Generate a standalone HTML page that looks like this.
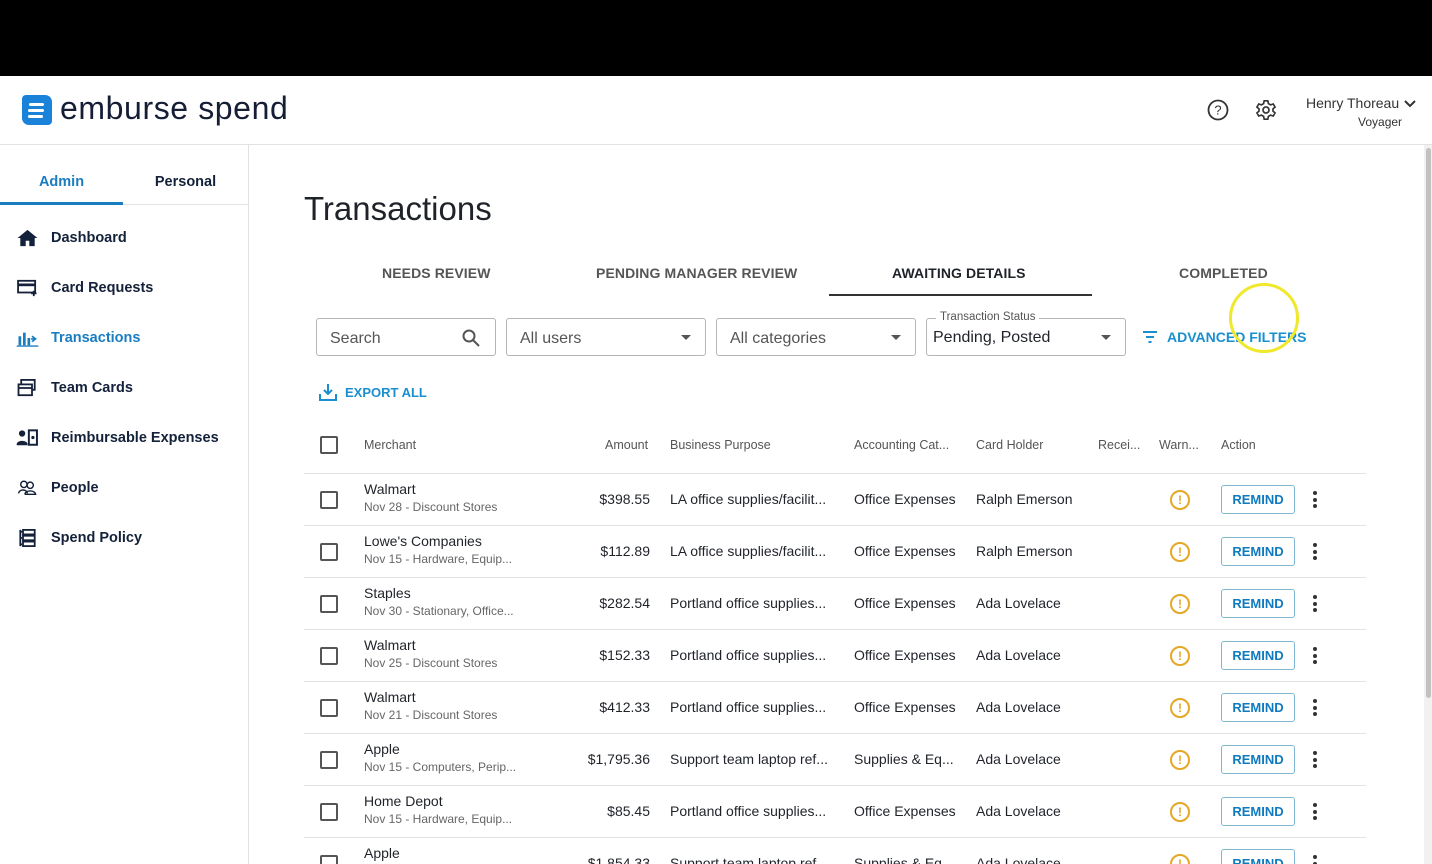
<!DOCTYPE html><html><head><style>
*{box-sizing:border-box;margin:0;padding:0}
html{width:1432px;height:864px;overflow:hidden}
body{width:1432px;height:864px;overflow:hidden;background:#fff;font-family:"Liberation Sans",sans-serif;color:#1f2329;position:relative}
.abs{position:absolute}
.top{left:0;top:0;width:1432px;height:76px;background:#000}
.hdr{left:0;top:76px;width:1432px;height:69px;border-bottom:1px solid #e2e2e2;background:#fff}
.side{left:0;top:145px;width:249px;height:719px;border-right:1px solid #e2e2e2}
.nav{position:absolute;left:16px;font-size:14.5px;font-weight:bold;color:#14213a;display:flex;align-items:center}
.nav svg{margin-right:12px}
.tab{position:absolute;top:265px;font-size:14px;font-weight:bold;color:#555;letter-spacing:.1px}
.box{position:absolute;top:318px;height:38px;border:1px solid #b5b5b5;border-radius:3px;font-size:16px;color:#555;padding:11px 13px}
.caret{position:absolute;right:14px;top:16px;width:0;height:0;border-left:5px solid transparent;border-right:5px solid transparent;border-top:5px solid #555}
.cb{position:absolute;left:320px;width:18px;height:18px;border:2px solid #555;border-radius:2px}
.th{position:absolute;top:438px;font-size:12.5px;color:#555}
.row{position:absolute;left:304px;width:1062px;height:52px;border-bottom:1px solid #e2e2e2}
.c{position:absolute;font-size:14px;color:#1f2329;white-space:nowrap}
.sub{font-size:12px;color:#666;display:block;margin-top:3px}
.rem{position:absolute;left:917px;top:11px;width:74px;height:29px;border:1px solid #7fb6d2;border-radius:3px;color:#0f7bbf;font-weight:bold;font-size:13px;text-align:center;line-height:27px}
.warn{position:absolute;left:866px;top:16px;width:20px;height:20px;border:2px solid #e5a823;border-radius:50%;color:#e5a823;font-weight:bold;font-size:12px;text-align:center;line-height:16px}
.keb{position:absolute;left:1009px;top:17px;width:4px}
.keb i{display:block;width:4px;height:4px;background:#333;border-radius:50%;margin-bottom:2.5px}
</style></head><body>
<div class="abs top"></div>
<div class="abs hdr">
 <div class="abs" style="left:22px;top:19px;width:30px;height:30px;background:#1a82d9;border-radius:4px 7px 4px 7px"><div style="position:absolute;left:7px;top:8px;width:15px;height:3px;background:#fff;border-radius:2px"></div><div style="position:absolute;left:6px;top:14px;width:16px;height:3px;background:#fff;border-radius:2px"></div><div style="position:absolute;left:6px;top:20px;width:15px;height:3px;background:#fff;border-radius:2px"></div></div>
 <div class="abs" style="left:60px;top:14px;font-size:32px;color:#161e36;letter-spacing:0.6px">emburse spend</div>
 <svg class="abs" style="left:1207px;top:23px" width="22" height="22" viewBox="0 0 22 22"><circle cx="11" cy="11" r="9.5" fill="none" stroke="#333" stroke-width="1.8"/><text x="11" y="15.5" font-size="13" text-anchor="middle" fill="#333" font-family="Liberation Sans">?</text></svg>
 <svg class="abs" style="left:1255px;top:23px" width="22" height="22" viewBox="0 0 24 24"><path fill="none" stroke="#333" stroke-width="1.8" d="M10 2h4l.6 3 2.4 1.4 2.9-1 2 3.4-2.3 2v2.4l2.3 2-2 3.4-2.9-1-2.4 1.4L14 22h-4l-.6-3-2.4-1.4-2.9 1-2-3.4 2.3-2v-2.4l-2.3-2 2-3.4 2.9 1L9.4 5z"/><circle cx="12" cy="12" r="3.3" fill="none" stroke="#333" stroke-width="1.8"/></svg>
 <div class="abs" style="left:1306px;top:19px;font-size:14px;color:#333">Henry Thoreau</div>
 <svg class="abs" style="left:1403px;top:23px" width="14" height="10"><path d="M2 2l5 5 5-5" fill="none" stroke="#333" stroke-width="2"/></svg>
 <div class="abs" style="left:1358px;top:39px;font-size:12px;color:#333">Voyager</div>
</div>
<div class="abs" style="left:1424px;top:145px;width:8px;height:719px;background:#f1f1f1"><div style="margin-left:2px;margin-top:3px;width:5px;height:550px;background:#c1c1c1;border-radius:3px"></div></div>
<div class="abs side">
 <div class="abs" style="left:0;top:29px;width:123px;text-align:center;font-size:14.5px;font-weight:bold;color:#1a7dc2">Admin</div>
 <div class="abs" style="left:123px;top:29px;width:125px;text-align:center;font-size:14.5px;font-weight:bold;color:#14213a">Personal</div>
 <div class="abs" style="left:0;top:59px;width:248px;height:1px;background:#e2e2e2"></div>
 <div class="abs" style="left:0;top:57px;width:123px;height:3px;background:#1a7dc2"></div>
</div>
<div class="nav" style="top:229px"><svg width="23" height="18" viewBox="0 0 24 20"><path d="M12 1L1 10h3v9h6v-6h4v6h6v-9h3z" fill="#14213a"/></svg>Dashboard</div>
<div class="nav" style="top:279px"><svg width="23" height="18" viewBox="0 0 24 20"><rect x="1.5" y="2" width="19" height="13" fill="none" stroke="#14213a" stroke-width="2"/><rect x="1.5" y="5" width="19" height="3" fill="#14213a"/><path d="M19 13v6M16 16h6" stroke="#14213a" stroke-width="2"/></svg>Card Requests</div>
<div class="nav" style="top:329px;color:#1a7dc2"><svg width="23" height="18" viewBox="0 0 24 20"><path d="M2 18V8h3v10zm5 0V4h3v14zm5 0v-8h3v8z" fill="#1a7dc2"/><path d="M17 8l4 3-4 3M21 11h-5" stroke="#1a7dc2" stroke-width="1.8" fill="none"/><path d="M0 19h24" stroke="#1a7dc2" stroke-width="1.5"/></svg>Transactions</div>
<div class="nav" style="top:379px"><svg width="23" height="18" viewBox="0 0 24 20"><rect x="5" y="1" width="15" height="11" fill="none" stroke="#14213a" stroke-width="2"/><rect x="2" y="6" width="15" height="12" fill="#fff" stroke="#14213a" stroke-width="2"/><path d="M2 10h15" stroke="#14213a" stroke-width="2"/></svg>Team Cards</div>
<div class="nav" style="top:429px"><svg width="23" height="18" viewBox="0 0 24 20"><circle cx="6" cy="5" r="3.5" fill="#14213a"/><path d="M0 17c0-5 12-5 12 0v1H0z" fill="#14213a"/><rect x="13.5" y="1.5" width="9" height="16" fill="none" stroke="#14213a" stroke-width="2.2"/><circle cx="18" cy="9.5" r="1.8" fill="#14213a"/></svg>Reimbursable Expenses</div>
<div class="nav" style="top:479px"><svg width="23" height="18" viewBox="0 0 24 20"><circle cx="8" cy="6" r="3.5" fill="none" stroke="#14213a" stroke-width="1.6"/><circle cx="15" cy="7" r="3.5" fill="none" stroke="#14213a" stroke-width="1.6"/><path d="M2 16c1-5 9-5 10 0M9 17c1-5 11-5 12 0v0H9" fill="none" stroke="#14213a" stroke-width="1.6"/></svg>People</div>
<div class="nav" style="top:529px"><svg width="23" height="18" viewBox="0 0 24 20"><path d="M4 1v18M4 3h2M4 10h2M4 17h2" stroke="#14213a" stroke-width="2"/><rect x="7" y="1" width="13" height="5" fill="none" stroke="#14213a" stroke-width="2"/><rect x="7" y="7.5" width="13" height="5" fill="none" stroke="#14213a" stroke-width="2"/><rect x="7" y="14" width="13" height="5" fill="none" stroke="#14213a" stroke-width="2"/></svg>Spend Policy</div>

<div class="abs" style="left:304px;top:190px;font-size:33px;color:#1f2329">Transactions</div>
<div class="tab" style="left:382px">NEEDS REVIEW</div>
<div class="tab" style="left:596px">PENDING MANAGER REVIEW</div>
<div class="tab" style="left:892px;color:#1f2329">AWAITING DETAILS</div>
<div class="tab" style="left:1179px">COMPLETED</div>
<div class="abs" style="left:829px;top:294px;width:263px;height:2px;background:#333"></div>

<div class="box" style="left:316px;width:180px">Search<svg style="position:absolute;right:15px;top:10px" width="18" height="18" viewBox="0 0 18 18"><circle cx="7" cy="7" r="5.5" fill="none" stroke="#555" stroke-width="2"/><path d="M11 11l6 6" stroke="#555" stroke-width="2"/></svg></div>
<div class="box" style="left:506px;width:200px">All users<div class="caret"></div></div>
<div class="box" style="left:716px;width:200px">All categories<div class="caret"></div></div>
<div class="box" style="left:926px;width:200px;color:#1f2329;padding-top:10px;padding-left:6px">Pending, Posted<div class="caret"></div><div style="position:absolute;left:9px;top:-8px;background:#fff;padding:0 4px;font-size:11.5px;color:#555">Transaction Status</div></div>
<svg class="abs" style="left:1142px;top:330px" width="16" height="14"><path d="M1 2h14M4 7h8M6.5 12h3" stroke="#1a8fd0" stroke-width="2"/></svg>
<div class="abs" style="left:1167px;top:329px;font-size:14px;font-weight:bold;color:#1a8fd0">ADVANCED FILTERS</div>
<div class="abs" style="left:1229px;top:283px;width:70px;height:70px;border:3px solid #f0e82a;border-radius:50%"></div>
<svg class="abs" style="left:318px;top:382px" width="20" height="20" viewBox="0 0 20 20"><path d="M10 2v10M6 8l4 4 4-4M2 12v6h16v-6" fill="none" stroke="#1a8fd0" stroke-width="2"/></svg>
<div class="abs" style="left:345px;top:385px;font-size:13px;font-weight:bold;color:#1a8fd0">EXPORT ALL</div>

<div class="cb" style="top:436px"></div>
<div class="th" style="left:364px">Merchant</div>
<div class="th" style="left:605px">Amount</div>
<div class="th" style="left:670px">Business Purpose</div>
<div class="th" style="left:854px">Accounting Cat...</div>
<div class="th" style="left:976px">Card Holder</div>
<div class="th" style="left:1098px">Recei...</div>
<div class="th" style="left:1159px">Warn...</div>
<div class="th" style="left:1221px">Action</div>
<div class="abs" style="left:304px;top:473px;width:1062px;height:1px;background:#e2e2e2"></div>

<div id="rows"></div>
<script>
var d=[["Walmart","Nov 28 - Discount Stores","$398.55","LA office supplies/facilit...","Office Expenses","Ralph Emerson"],
["Lowe's Companies","Nov 15 - Hardware, Equip...","$112.89","LA office supplies/facilit...","Office Expenses","Ralph Emerson"],
["Staples","Nov 30 - Stationary, Office...","$282.54","Portland office supplies...","Office Expenses","Ada Lovelace"],
["Walmart","Nov 25 - Discount Stores","$152.33","Portland office supplies...","Office Expenses","Ada Lovelace"],
["Walmart","Nov 21 - Discount Stores","$412.33","Portland office supplies...","Office Expenses","Ada Lovelace"],
["Apple","Nov 15 - Computers, Perip...","$1,795.36","Support team laptop ref...","Supplies &amp; Eq...","Ada Lovelace"],
["Home Depot","Nov 15 - Hardware, Equip...","$85.45","Portland office supplies...","Office Expenses","Ada Lovelace"],
["Apple","Nov 15 - Computers, Perip...","$1,854.33","Support team laptop ref...","Supplies &amp; Eq...","Ada Lovelace"]];
var h="";d.forEach(function(r,i){var t=474+i*52;h+='<div class="row" style="top:'+t+'px"><div class="cb" style="left:16px;top:17px"></div><div class="c" style="left:60px;top:7px">'+r[0]+'<span class="sub">'+r[1]+'</span></div><div class="c" style="right:716px;top:17px">'+r[2]+'</div><div class="c" style="left:366px;top:17px">'+r[3]+'</div><div class="c" style="left:550px;top:17px">'+r[4]+'</div><div class="c" style="left:672px;top:17px">'+r[5]+'</div><div class="warn">!</div><div class="rem">REMIND</div><div class="keb"><i></i><i></i><i></i></div></div>'});
document.getElementById("rows").innerHTML=h;
</script>
</body></html>
